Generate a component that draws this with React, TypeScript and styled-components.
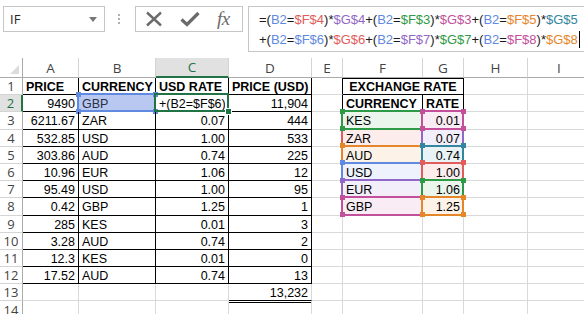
import React from "react";
import styled, { createGlobalStyle } from "styled-components";

const C = {
  blue: "#6089e0",
  red: "#e25c5c",
  purple: "#9168c8",
  green: "#2f9a45",
  magenta: "#c3509a",
  orange: "#e6862a",
  teal: "#33869e",
};
type Hue = keyof typeof C;

const FILL: Record<Hue, string> = {
  blue: "#edf2fc",
  red: "#fcecec",
  purple: "#f2eefa",
  green: "#eaf5ec",
  magenta: "#f9ecf4",
  orange: "#fdf2e8",
  teal: "#e9f3f6",
};

const Global = createGlobalStyle`
  html, body { margin: 0; padding: 0; background: #fff; overflow: hidden; }
  body { width: 584px; height: 314px; font-family: "Liberation Sans", Arial, sans-serif; }
`;

/* ---------- formula bar ---------- */
const Toolbar = styled.div`
  display: flex;
  align-items: flex-start;
  height: 58px;
  box-sizing: border-box;
  padding: 6px 0 0 3px;
  overflow: hidden;
`;
const NameBox = styled.div`
  flex: none;
  width: 102px;
  height: 26px;
  box-sizing: border-box;
  border: 1px solid #c6c6c6;
  display: flex;
  align-items: center;
  justify-content: space-between;
  padding: 0 7px 0 6px;
  font-family: "Open Sans", sans-serif;
  font-size: 13px;
  color: #262626;
`;
const Caret = styled.span`
  width: 0;
  height: 0;
  border-left: 4px solid transparent;
  border-right: 4px solid transparent;
  border-top: 5px solid #777;
`;
const Grip = styled.div`
  flex: none;
  width: 2px;
  height: 26px;
  margin: 0 15px 0 13px;
  display: flex;
  flex-direction: column;
  align-items: center;
  justify-content: center;
  gap: 2px;
`;
const Dot = styled.span`
  width: 2px;
  height: 2px;
  background: #b0b0b0;
`;
const Buttons = styled.div`
  flex: none;
  width: 108px;
  height: 26px;
  box-sizing: border-box;
  border: 1px solid #c6c6c6;
  display: flex;
  align-items: center;
  padding-left: 9px;
`;
const IconSlot = styled.span<{ $w: number }>`
  width: ${(p) => p.$w}px;
  display: flex;
  align-items: center;
`;
const Fx = styled.span`
  font-family: "Liberation Serif", serif;
  font-style: italic;
  font-size: 19px;
  color: #6a6a6a;
  letter-spacing: -0.5px;
  line-height: 1;
  margin-top: -2px;
`;
const FormulaBox = styled.div`
  flex: none;
  width: 360px;
  height: 46px;
  margin-left: 5px;
  box-sizing: border-box;
  border: 1px solid #c6c6c6;
  border-right: none;
  padding: 3px 0 0 10px;
  font-size: 13px;
  line-height: 20px;
  white-space: nowrap;
  color: #222;
`;
const FLine = styled.div`
  height: 20px;
`;
const Tok = styled.span<{ $c?: string }>`
  color: ${(p) => p.$c || "#1a1a1a"};
`;
const Cursor = styled.span`
  display: inline-block;
  width: 1px;
  height: 17px;
  background: #000;
  vertical-align: -4px;
  margin-left: 1px;
`;

/* ---------- sheet ---------- */
const Sheet = styled.div`
  display: grid;
  grid-template-columns: 23px 56px 77px 73px 83px 31px 80px 41px 64px 63px;
  grid-template-rows: 20px repeat(14, 17.2px);
  font-size: 12.5px;
`;
const Corner = styled.div`
  position: relative;
  box-sizing: border-box;
  border-right: 1px solid #ababab;
  border-bottom: 1px solid #ababab;
`;
const Tri = styled.span`
  position: absolute;
  right: 3px;
  bottom: 3px;
  width: 0;
  height: 0;
  border-left: 9px solid transparent;
  border-bottom: 9px solid #dcdcdc;
`;
const ColHead = styled.div<{ $active?: boolean }>`
  box-sizing: border-box;
  display: flex;
  align-items: center;
  justify-content: center;
  font-family: "Open Sans", sans-serif;
  font-size: 13.5px;
  color: ${(p) => (p.$active ? "#217346" : "#444")};
  background: ${(p) => (p.$active ? "#e1e1e1" : "#fff")};
  border-right: 1px solid #d4d4d4;
  border-bottom: ${(p) => (p.$active ? "2px solid #217346" : "1px solid #ababab")};
`;
const RowHead = styled.div<{ $active?: boolean }>`
  box-sizing: border-box;
  display: flex;
  align-items: center;
  justify-content: center;
  font-family: "Open Sans", sans-serif;
  font-size: 13px;
  color: ${(p) => (p.$active ? "#217346" : "#444")};
  background: ${(p) => (p.$active ? "#e1e1e1" : "#fff")};
  border-right: ${(p) => (p.$active ? "2px solid #217346" : "1px solid #ababab")};
  border-bottom: 1px solid #d4d4d4;
`;
const Cell = styled.div<{
  $r?: boolean;
  $b?: boolean;
  $t?: boolean;
  $align?: "left" | "right" | "center";
  $bold?: boolean;
  $bg?: string;
  $span?: number;
}>`
  position: relative;
  box-sizing: border-box;
  grid-column: span ${(p) => p.$span || 1};
  border-right: 1px solid ${(p) => (p.$r ? "#000" : "#d9d9d9")};
  border-bottom: 1px solid ${(p) => (p.$b ? "#000" : "#d9d9d9")};
  box-shadow: ${(p) => (p.$t ? "inset 0 1px 0 #000" : "none")};
  background: ${(p) => p.$bg || "transparent"};
  padding: 0 3px;
  text-align: ${(p) => p.$align || "left"};
  font-weight: ${(p) => (p.$bold ? 700 : 400)};
  line-height: 18px;
  white-space: nowrap;
  color: #000;
`;
const Clip = styled.span`
  display: block;
  overflow: hidden;
`;
const DoubleRule = styled.span`
  position: absolute;
  left: 0;
  right: -1px;
  bottom: -3px;
  height: 1px;
  background: #000;
`;
const Frame = styled.div<{ $c: string; $z: number }>`
  position: absolute;
  top: -2px;
  left: -2px;
  right: -1px;
  bottom: -1px;
  border: 2px solid ${(p) => p.$c};
  z-index: ${(p) => p.$z};
  pointer-events: none;
`;
const Handle = styled.span<{ $c: string; $v: "top" | "bottom"; $h: "left" | "right" }>`
  position: absolute;
  width: 5px;
  height: 5px;
  background: ${(p) => p.$c};
  ${(p) => p.$v}: -3.5px;
  ${(p) => p.$h}: -3.5px;
`;
const FillHandle = styled.span`
  position: absolute;
  right: -5px;
  bottom: -5px;
  width: 5px;
  height: 5px;
  background: #217346;
  border: 1px solid #fff;
`;
const SelText = styled.span`
  color: #2a2f45;
`;

const XIcon = () => (
  <svg width="18" height="16" viewBox="0 0 18 16">
    <path d="M2 1.5 L16 14.5 M16 1.5 L2 14.5" stroke="#6b6b6b" strokeWidth="2.4" fill="none" />
  </svg>
);
const CheckIcon = () => (
  <svg width="20" height="16" viewBox="0 0 20 16">
    <path d="M1.5 8.5 L7 13.5 L18.5 2" stroke="#6b6b6b" strokeWidth="3.2" fill="none" />
  </svg>
);

const Hl = ({ hue, z }: { hue: Hue; z: number }) => (
  <Frame $c={C[hue]} $z={z}>
    <Handle $c={C[hue]} $v="top" $h="left" />
    <Handle $c={C[hue]} $v="top" $h="right" />
    <Handle $c={C[hue]} $v="bottom" $h="left" />
    <Handle $c={C[hue]} $v="bottom" $h="right" />
  </Frame>
);

type Tk = [string, string?];
const line1: Tk[] = [
  ["=("], ["B2", C.blue], ["="], ["$F$4", C.red], [")*"], ["$G$4", C.purple],
  ["+("], ["B2", C.blue], ["="], ["$F$3", C.green], [")*"], ["$G$3", C.magenta],
  ["+("], ["B2", C.blue], ["="], ["$F$5", C.orange], [")*"], ["$G$5", C.teal],
];
const line2: Tk[] = [
  ["+("], ["B2", C.blue], ["="], ["$F$6", C.blue], [")*"], ["$G$6", C.red],
  ["+("], ["B2", C.blue], ["="], ["$F$7", C.purple], [")*"], ["$G$7", C.green],
  ["+("], ["B2", C.blue], ["="], ["$F$8", C.magenta], [")*"], ["$G$8", C.orange],
];

const A = ["9490", "6211.67", "532.85", "303.86", "10.96", "95.49", "0.42", "285", "3.28", "12.3", "17.52"];
const B = ["GBP", "ZAR", "USD", "AUD", "EUR", "USD", "GBP", "KES", "AUD", "KES", "AUD"];
const Cc = ["", "0.07", "1.00", "0.74", "1.06", "1.00", "1.25", "0.01", "0.74", "0.01", "0.74"];
const D = ["11,904", "444", "533", "225", "12", "95", "1", "3", "2", "0", "13"];

const rates: { cur: string; ch: Hue; cz: number; rate: string; rh: Hue; rz: number }[] = [
  { cur: "KES", ch: "green", cz: 3, rate: "0.01", rh: "magenta", rz: 4 },
  { cur: "ZAR", ch: "red", cz: 1, rate: "0.07", rh: "purple", rz: 2 },
  { cur: "AUD", ch: "orange", cz: 5, rate: "0.74", rh: "teal", rz: 6 },
  { cur: "USD", ch: "blue", cz: 7, rate: "1.00", rh: "red", rz: 8 },
  { cur: "EUR", ch: "purple", cz: 9, rate: "1.06", rh: "green", rz: 10 },
  { cur: "GBP", ch: "magenta", cz: 11, rate: "1.25", rh: "orange", rz: 12 },
];

const cols = ["A", "B", "C", "D", "E", "F", "G", "H", "I"];

export default function App() {
  const rows: React.ReactNode[] = [];

  rows.push(
    <React.Fragment key="r1">
      <RowHead>1</RowHead>
      <Cell $r $b $bold>PRICE</Cell>
      <Cell $r $b $bold>CURRENCY</Cell>
      <Cell $r $b $bold>USD RATE</Cell>
      <Cell $r $b $bold>PRICE (USD)</Cell>
      <Cell $r />
      <Cell $span={2} $r $b $t $bold $align="center">EXCHANGE RATE</Cell>
      <Cell />
      <Cell />
    </React.Fragment>
  );

  for (let i = 0; i < 11; i++) {
    const r = i + 2;
    const rate = r >= 3 && r <= 8 ? rates[r - 3] : null;
    rows.push(
      <React.Fragment key={"r" + r}>
        <RowHead $active={r === 2}>{r}</RowHead>
        <Cell $r $b $align="right">{A[i]}</Cell>
        {r === 2 ? (
          <Cell $r $b $bg="#b9c8f0">
            <SelText>{B[i]}</SelText>
            <Hl hue="blue" z={0} />
          </Cell>
        ) : (
          <Cell $r $b>{B[i]}</Cell>
        )}
        {r === 2 ? (
          <Cell $r $b>
            <Clip>+(B2=$F$6)</Clip>
            <Frame $c="#217346" $z={20}>
              <FillHandle />
            </Frame>
          </Cell>
        ) : (
          <Cell $r $b $align="right">{Cc[i]}</Cell>
        )}
        <Cell $r $b $align="right">{D[i]}</Cell>
        <Cell $r={r <= 2} />
        {r === 2 ? (
          <>
            <Cell $r $b $bold>CURRENCY</Cell>
            <Cell $r $b $bold>RATE</Cell>
          </>
        ) : rate ? (
          <>
            <Cell $bg={FILL[rate.ch]}>
              {rate.cur}
              <Hl hue={rate.ch} z={rate.cz} />
            </Cell>
            <Cell $bg={FILL[rate.rh]} $align="right">
              {rate.rate}
              <Hl hue={rate.rh} z={rate.rz} />
            </Cell>
          </>
        ) : (
          <>
            <Cell />
            <Cell />
          </>
        )}
        <Cell />
        <Cell />
      </React.Fragment>
    );
  }

  rows.push(
    <React.Fragment key="r13">
      <RowHead>13</RowHead>
      <Cell />
      <Cell />
      <Cell />
      <Cell $b $align="right">
        13,232
        <DoubleRule />
      </Cell>
      <Cell />
      <Cell />
      <Cell />
      <Cell />
      <Cell />
    </React.Fragment>
  );
  rows.push(
    <React.Fragment key="r14">
      <RowHead>14</RowHead>
      {cols.map((c) => (
        <Cell key={c} />
      ))}
    </React.Fragment>
  );

  return (
    <>
      <Global />
      <Toolbar>
        <NameBox>
          IF
          <Caret />
        </NameBox>
        <Grip>
          <Dot />
          <Dot />
          <Dot />
        </Grip>
        <Buttons>
          <IconSlot $w={35}>
            <XIcon />
          </IconSlot>
          <IconSlot $w={37}>
            <CheckIcon />
          </IconSlot>
          <IconSlot $w={24}>
            <Fx>fx</Fx>
          </IconSlot>
        </Buttons>
        <FormulaBox>
          <FLine>
            {line1.map(([t, c], i) => (
              <Tok key={i} $c={c}>{t}</Tok>
            ))}
          </FLine>
          <FLine>
            {line2.map(([t, c], i) => (
              <Tok key={i} $c={c}>{t}</Tok>
            ))}
            <Cursor />
          </FLine>
        </FormulaBox>
      </Toolbar>
      <Sheet>
        <Corner>
          <Tri />
        </Corner>
        {cols.map((c) => (
          <ColHead key={c} $active={c === "C"}>{c}</ColHead>
        ))}
        {rows}
      </Sheet>
    </>
  );
}
